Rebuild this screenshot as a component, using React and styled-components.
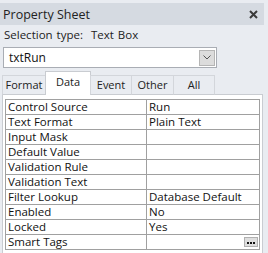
import React from "react";
import styled, { createGlobalStyle } from "styled-components";

const Global = createGlobalStyle`
  html, body { margin: 0; padding: 0; }
  body { background: #e9ecf1; font-family: "Open Sans", "Noto Sans", sans-serif; }
`;

const Sheet = styled.div`
  width: 268px;
  height: 253px;
  background: #e9ecf1;
  box-sizing: border-box;
  padding-top: 3px;
  display: flex;
  flex-direction: column;
  overflow: hidden;
`;

const TitleBar = styled.div`
  height: 22px;
  width: 264px;
  background: #d5dae1;
  display: flex;
  align-items: center;
  justify-content: space-between;
  padding: 0 6px 0 3px;
  box-sizing: border-box;
  font-size: 12.5px;
  color: #222;
`;

const Close = styled.svg`
  width: 9px;
  height: 9px;
`;

const SelType = styled.div`
  font-size: 11.5px;
  color: #222;
  padding: 2px 0 0 4px;
  height: 20px;
  box-sizing: border-box;
  word-spacing: 1px;
`;

const Combo = styled.div`
  margin: 2px 0 0 3px;
  width: 214px;
  height: 21px;
  background: #fff;
  border: 1px solid #a9adb4;
  box-sizing: border-box;
  display: flex;
  align-items: center;
  justify-content: space-between;
  padding: 0 1px 0 5px;
  font-size: 12px;
  color: #111;
`;

const DropBtn = styled.div`
  width: 16px;
  height: 16px;
  background: #dcdcdc;
  border: 1px solid #b5b5b5;
  box-sizing: border-box;
  display: flex;
  align-items: center;
  justify-content: center;
`;

const Tabs = styled.div`
  display: flex;
  margin: 3px 0 0 2px;
  height: 24px;
  align-items: flex-end;
  position: relative;
  z-index: 1;
`;

const Tab = styled.div`
  width: ${(p) => p.w}px;
  height: ${(p) => (p.active ? 24 : 20)}px;
  box-sizing: border-box;
  background: ${(p) => (p.active ? "#fff" : "#e9ecf1")};
  border: 1px solid ${(p) => (p.active ? "#c9ccd1" : "#d3d6db")};
  border-bottom: ${(p) => (p.active ? "none" : "1px solid #c9ccd1")};
  margin-left: -1px;
  &:first-child { margin-left: 0; }
  display: flex;
  align-items: center;
  justify-content: center;
  font-size: 11px;
  color: #222;
  white-space: nowrap;
  padding-bottom: ${(p) => (p.active ? 5 : 2)}px;
`;

const Panel = styled.div`
  margin: -1px 0 0 2px;
  width: 261px;
  flex: 1;
  background: #fff;
  border: 1px solid #c9ccd1;
  border-bottom: none;
  box-sizing: border-box;
  padding: 4px 2px 0 2px;
`;

const Grid = styled.div`
  display: grid;
  grid-template-columns: 141px 1fr;
  border-top: 1px solid #a0a0a0;
  border-left: 1px solid #a0a0a0;
`;

const Cell = styled.div`
  height: 15px;
  box-sizing: border-box;
  border-right: 1px solid #a0a0a0;
  border-bottom: 1px solid #a0a0a0;
  font-size: 11.5px;
  line-height: 14px;
  padding-left: 2px;
  color: #111;
  display: flex;
  align-items: center;
  white-space: nowrap;
`;

const Ellipsis = styled.div`
  margin-left: auto;
  margin-right: 1px;
  width: 14px;
  height: 10px;
  background: #dedede;
  border: 1px solid #b0b0b0;
  box-sizing: border-box;
  display: flex;
  align-items: center;
  justify-content: center;
  gap: 1px;
  padding-top: 2px;
`;

const Dot = styled.span`
  width: 2px;
  height: 2px;
  background: #111;
`;

const rows = [
  ["Control Source", "Run"],
  ["Text Format", "Plain Text"],
  ["Input Mask", ""],
  ["Default Value", ""],
  ["Validation Rule", ""],
  ["Validation Text", ""],
  ["Filter Lookup", "Database Default"],
  ["Enabled", "No"],
  ["Locked", "Yes"],
  ["Smart Tags", "", true],
];

const tabs = [
  ["Format", 44],
  ["Data", 46],
  ["Event", 42],
  ["Other", 43],
  ["All", 42],
];

export default function App() {
  return (
    <>
      <Global />
      <Sheet>
        <TitleBar>
          <span>Property Sheet</span>
          <Close viewBox="0 0 9 9">
            <path d="M1 1 L8 8 M8 1 L1 8" stroke="#3a3a3a" strokeWidth="2" />
          </Close>
        </TitleBar>
        <SelType>Selection type:&nbsp; Text Box</SelType>
        <Combo>
          <span>txtRun</span>
          <DropBtn>
            <svg width="8" height="5" viewBox="0 0 8 5">
              <path d="M0.5 0.5 L4 4 L7.5 0.5" stroke="#555" fill="none" />
            </svg>
          </DropBtn>
        </Combo>
        <Tabs>
          {tabs.map(([t, w]) => (
            <Tab key={t} w={w} active={t === "Data"}>
              {t}
            </Tab>
          ))}
        </Tabs>
        <Panel>
          <Grid>
            {rows.map(([k, v, btn]) => (
              <React.Fragment key={k}>
                <Cell>{k}</Cell>
                <Cell>
                  {v}
                  {btn && (
                    <Ellipsis>
                      <Dot />
                      <Dot />
                      <Dot />
                    </Ellipsis>
                  )}
                </Cell>
              </React.Fragment>
            ))}
          </Grid>
        </Panel>
      </Sheet>
    </>
  );
}
